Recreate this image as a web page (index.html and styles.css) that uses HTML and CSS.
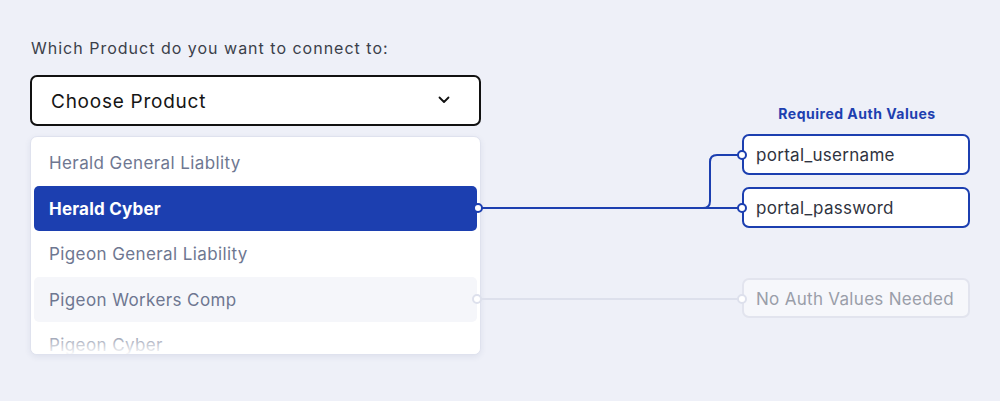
FILE: index.html
```html
<!DOCTYPE html>
<html>
<head>
<meta charset="utf-8">
<link rel="stylesheet" href="styles.css">
</head>
<body>
<div class="page">
  <div class="left">
    <div class="question">Which Product do you want to connect to:</div>
    <div class="select">
      <span>Choose Product</span>
      <svg class="chev" width="12" height="8" viewBox="0 0 12 8"><path d="M1.5 1.5 L6 6 L10.5 1.5" fill="none" stroke="#111" stroke-width="1.8" stroke-linecap="round" stroke-linejoin="round"/></svg>
    </div>
    <div class="dropdown">
      <div class="item">Herald General Liablity</div>
      <div class="item selected">Herald Cyber</div>
      <div class="item">Pigeon General Liability</div>
      <div class="item hover">Pigeon Workers Comp</div>
      <div class="item">Pigeon Cyber</div>
    </div>
  </div>
  <div class="right">
    <div class="heading">Required Auth Values</div>
    <div class="box">portal_username</div>
    <div class="box">portal_password</div>
    <div class="box muted">No Auth Values Needed</div>
  </div>
  <svg class="wires" width="1000" height="401" viewBox="0 0 1000 401">
    <path d="M478 208 H742" fill="none" stroke="#1c3fb0" stroke-width="2"/>
    <path d="M703 208 Q710 208 710 201 V162 Q710 155 717 155 H742" fill="none" stroke="#1c3fb0" stroke-width="2"/>
    <circle cx="478" cy="208" r="4" fill="#fff" stroke="#1c3fb0" stroke-width="2"/>
    <circle cx="742" cy="155" r="4" fill="#fff" stroke="#1c3fb0" stroke-width="2"/>
    <circle cx="742" cy="208" r="4" fill="#fff" stroke="#1c3fb0" stroke-width="2"/>
    <path d="M477 299 H742" fill="none" stroke="#dde0ec" stroke-width="2"/>
    <circle cx="477" cy="299" r="4" fill="#fff" stroke="#dde0ec" stroke-width="2"/>
    <circle cx="742" cy="299" r="4" fill="#fff" stroke="#dde0ec" stroke-width="2"/>
  </svg>
</div>
</body>
</html>
```

FILE: styles.css
```css
* { box-sizing: border-box; }
html, body { margin: 0; padding: 0; }
body {
  background: #eef0f8;
  font-family: "Inter", "Liberation Sans", sans-serif;
  width: 1000px;
  height: 401px;
  overflow: hidden;
}
.page {
  position: relative;
  display: flex;
  gap: 261px;
  padding: 38px 0 0 30px;
  height: 401px;
}
.left {
  width: 451px;
  display: flex;
  flex-direction: column;
}
.question {
  font-size: 16px;
  line-height: 20px;
  color: #3b3f4a;
  padding-left: 1px;
  letter-spacing: 1px;
}
.select {
  margin-top: 17px;
  height: 51px;
  border: 2px solid #111;
  border-radius: 7px;
  background: #fff;
  display: flex;
  align-items: center;
  justify-content: space-between;
  padding: 1px 29px 0 19px;
  font-size: 19px;
  color: #151515;
  letter-spacing: 0.75px;
}
.chev { display: block; margin-top: -2px; }
.dropdown {
  position: relative;
  margin-top: 10px;
  height: 219px;
  background: #fff;
  border: 1.5px solid #dfe2ee;
  border-radius: 7px;
  box-shadow: 0 2px 6px rgba(40, 50, 100, 0.08);
  padding: 3px 3px 0 3px;
  overflow: hidden;
  display: flex;
  flex-direction: column;
}
.dropdown::after {
  content: "";
  position: absolute;
  left: 0; right: 0; bottom: 0;
  height: 26px;
  background: linear-gradient(to bottom, rgba(255,255,255,0), rgba(255,255,255,0.95));
}
.item {
  flex: none;
  height: 45.5px;
  display: flex;
  align-items: center;
  padding: 1px 0 0 15px;
  font-size: 17px;
  color: #6e7791;
  border-radius: 5px;
  letter-spacing: 0.4px;
}
.item.selected {
  background: #1c3fb0;
  color: #fff;
  font-weight: 700;
  letter-spacing: 0.2px;
}
.item.hover {
  background: #f5f6fa;
}
.right {
  width: 228px;
  display: flex;
  flex-direction: column;
  padding-top: 68px;
}
.heading {
  text-align: center;
  font-size: 14px;
  line-height: 16px;
  font-weight: 700;
  color: #1d3fb0;
  margin-bottom: 12px;
  padding-left: 2px;
  letter-spacing: 0.5px;
}
.box {
  height: 41px;
  border: 2px solid #1c3fb0;
  border-radius: 7px;
  background: #fff;
  display: flex;
  align-items: center;
  padding: 1px 0 0 12px;
  font-size: 17px;
  color: #2f3340;
  margin-bottom: 12px;
  letter-spacing: 0.3px;
}
.box.muted {
  margin-top: 38px;
  height: 40px;
  border-color: #e2e4ee;
  background: #f6f7fb;
  color: #9a9ea9;
}
.wires {
  position: absolute;
  left: 0;
  top: 0;
  pointer-events: none;
}
```
